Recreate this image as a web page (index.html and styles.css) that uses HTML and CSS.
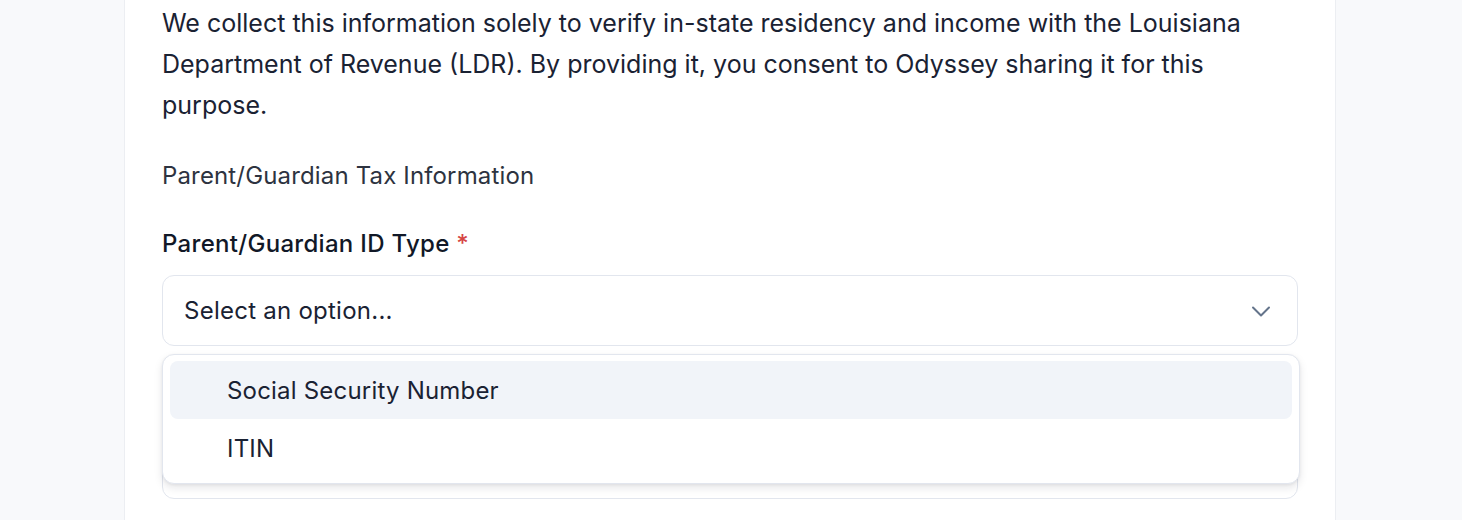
FILE: index.html
```html
<!DOCTYPE html>
<html lang="en">
<head>
    <meta charset="UTF-8">
    <meta name="viewport" content="width=device-width, initial-scale=1.0">
    <title>Parent/Guardian Tax Information</title>
    <link rel="stylesheet" href="styles.css">
</head>
<body>
    <div class="card">
        <p class="notice">We collect this information solely to verify in-state residency and income with the Louisiana Department of Revenue (LDR). By providing it, you consent to Odyssey sharing it for this purpose.</p>

        <h2 class="section-title">Parent/Guardian Tax Information</h2>

        <!-- ID type select -->
        <div class="field">
            <label class="field-label">Parent/Guardian ID Type <span class="required">*</span></label>
            <div class="select-wrap">
                <div class="select">
                    <span>Select an option...</span>
                    <svg class="chevron" width="24" height="24" viewBox="0 0 24 24" fill="none">
                        <path d="M4 8.5L12 16.5L20 8.5" stroke="#64748b" stroke-width="2" stroke-linecap="round" stroke-linejoin="round"/>
                    </svg>
                </div>
                <ul class="menu">
                    <li class="option active">Social Security Number</li>
                    <li class="option">ITIN</li>
                </ul>
            </div>
        </div>

        <!-- Next field (covered by the open menu) -->
        <div class="field next-field">
            <label class="field-label">Parent/Guardian ID Number <span class="required">*</span></label>
            <div class="input"></div>
        </div>
    </div>
</body>
</html>
```

FILE: styles.css
```css
body {
    margin: 0;
    background-color: #f8f9fb;
    font-family: Inter, "Noto Sans", sans-serif;
    color: #111827;
    height: 520px;
    overflow: hidden;
}
.card {
    margin-left: 124px;
    width: 1212px;
    min-height: 600px;
    background-color: #fff;
    border-left: 1px solid #eceef2;
    border-right: 1px solid #eceef2;
    padding: 0 37px 0 37px;
    box-sizing: border-box;
}
.notice {
    margin: 0;
    padding-top: 3px;
    font-size: 25px;
    line-height: 41px;
    color: #1a2233;
}
.section-title {
    margin: 34px 0 0;
    font-size: 24px;
    font-weight: 400;
    line-height: 32px;
    letter-spacing: 0.15px;
    color: #2d3340;
}
.field {
    margin-top: 36px;
}
.field-label {
    display: block;
    font-size: 24px;
    font-weight: 500;
    line-height: 32px;
    letter-spacing: 0.3px;
    color: #111827;
}
.required {
    color: #d64545;
}
.select-wrap {
    position: relative;
    margin-top: 15px;
}
.select {
    height: 71px;
    border: 1px solid #e2e6ee;
    border-radius: 12px;
    box-sizing: border-box;
    padding: 0 24px 0 21px;
    display: flex;
    align-items: center;
    justify-content: space-between;
    font-size: 24px;
    letter-spacing: 0.25px;
    color: #1a2233;
}
.chevron {
    width: 24px;
    height: 24px;
}
.menu {
    position: absolute;
    top: 79px;
    left: 0;
    right: -2px;
    margin: 0;
    padding: 6px 7px;
    list-style: none;
    background-color: #fff;
    border: 1px solid #e2e6ee;
    border-radius: 12px;
    box-shadow: 0 4px 8px rgba(15, 23, 42, 0.10), 0 1px 3px rgba(15, 23, 42, 0.06);
    z-index: 2;
}
.option {
    height: 58px;
    display: flex;
    align-items: center;
    padding-left: 57px;
    border-radius: 8px;
    font-size: 24px;
    letter-spacing: 0.2px;
    color: #1a2233;
}
.option.active {
    background-color: #f1f4f9;
}
.next-field {
    margin-top: 34px;
}
.next-field .input {
    margin-top: 15px;
    height: 70px;
    border: 1px solid #e2e6ee;
    border-radius: 12px;
}
```
